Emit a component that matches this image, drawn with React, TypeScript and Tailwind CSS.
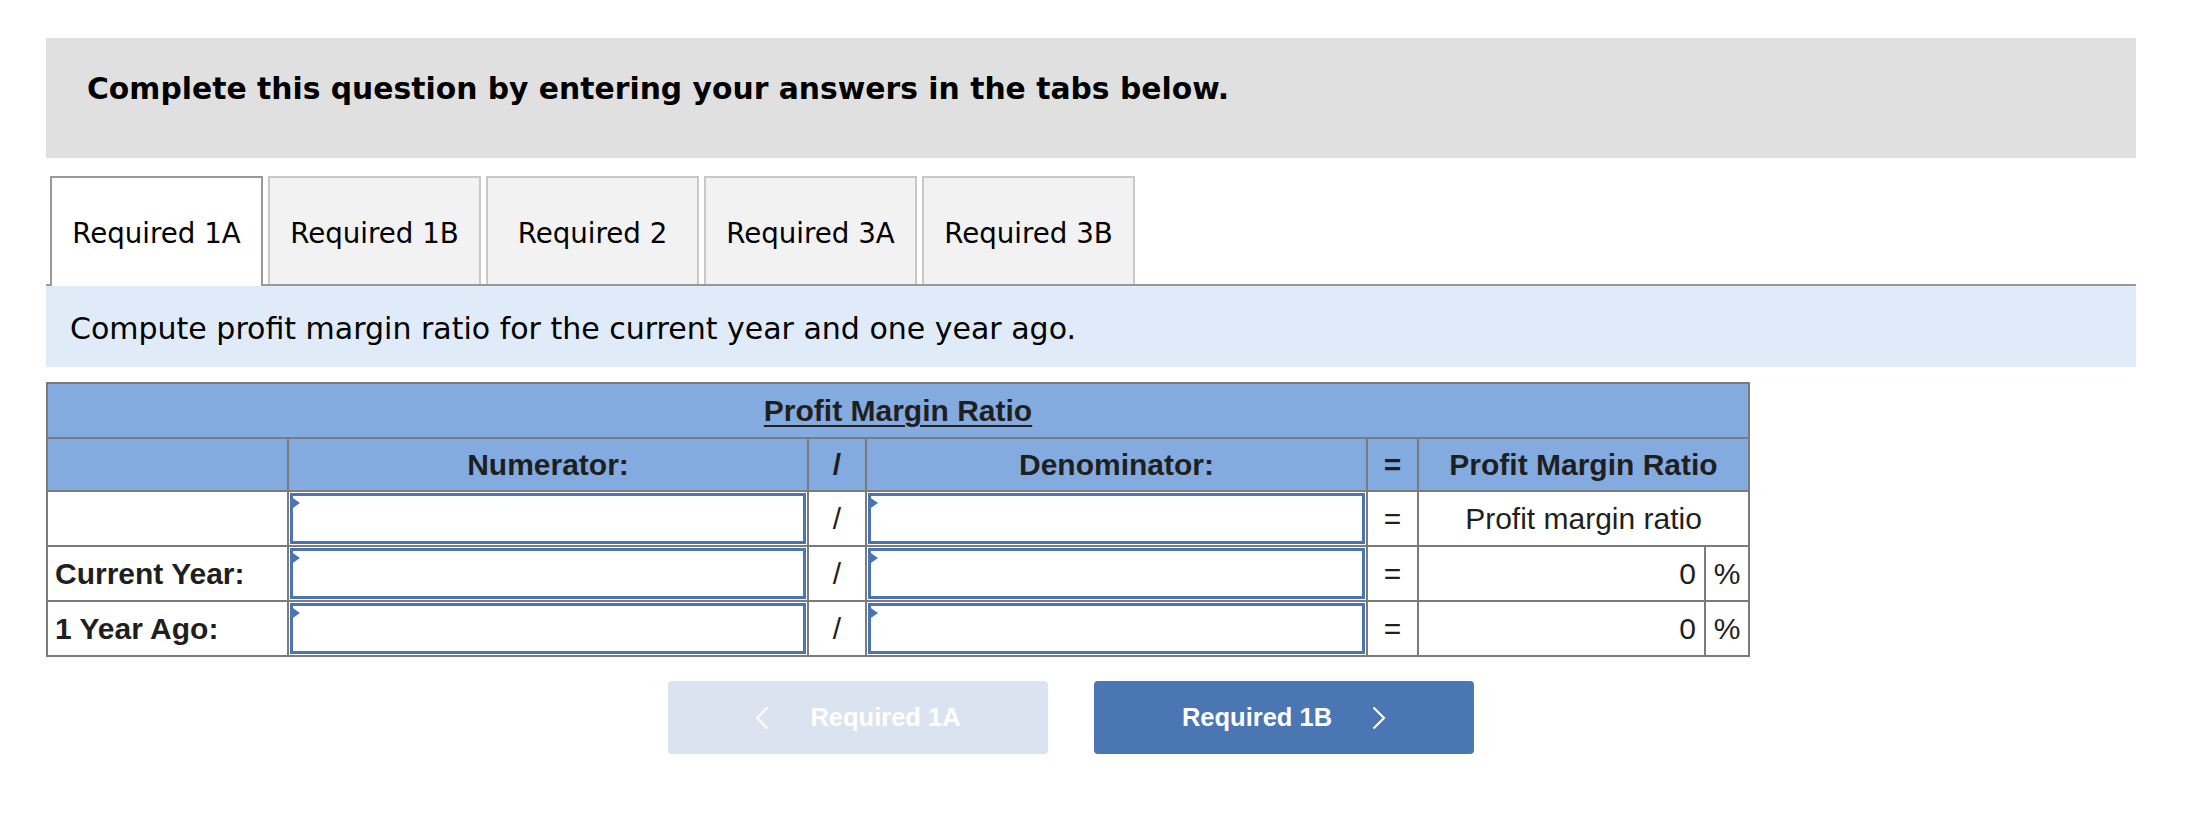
import * as React from "react";

const TABS = ["Required 1A", "Required 1B", "Required 2", "Required 3A", "Required 3B"];

const verdana = "font-['DejaVu_Sans',Verdana,sans-serif]";
const arial = "font-['Liberation_Sans',Arial,sans-serif]";

function Entry() {
  return (
    <div className="relative h-[51px] w-full border-[3px] border-[#4a74b4] bg-white">
      <svg className="absolute -left-[3px] top-0" width="10" height="14" viewBox="0 0 10 14">
        <polygon points="0,0 10,7 0,14" fill="#4a74b4" />
      </svg>
    </div>
  );
}

const cell = "border-2 border-[#7b7b7b]";
const head = "border-2 border-[#7b7b7b] bg-[#84abdf] font-bold text-[#1f1f1f]";

export default function App() {
  const rows = [
    { label: "", result: null },
    { label: "Current Year:", result: "0" },
    { label: "1 Year Ago:", result: "0" },
  ];

  return (
    <div className="min-h-screen bg-white pt-[38px]">
      <div className="ml-[46px] w-[2090px]">
        <div className={`h-[120px] bg-[#e0e0e0] pl-[41px] pt-[34px] ${verdana} text-[29.8px] font-bold leading-[34px] text-black`}>
          Complete this question by entering your answers in the tabs below.
        </div>

        <div className="mt-[18px] flex items-start gap-[5px] border-b-2 border-[#999] pl-[4px]">
          {TABS.map((t, i) => (
            <div
              key={t}
              className={
                i === 0
                  ? `relative z-10 -mb-[2px] flex h-[110px] w-[213px] items-center justify-center border-2 border-b-0 border-[#999] bg-white pt-[4px] ${verdana} text-[27.7px] text-black`
                  : `flex h-[108px] w-[213px] items-center justify-center border-2 border-b-0 border-[#c8c8c8] bg-[#f2f2f2] pt-[6px] ${verdana} text-[27.7px] text-black`
              }
            >
              {t}
            </div>
          ))}
        </div>

        <div className={`flex h-[81px] items-center bg-[#dfebf8] pl-[24px] pt-[3px] ${verdana} text-[30px] text-black`}>
          Compute profit margin ratio for the current year and one year ago.
        </div>

        <table className={`mt-[15px] w-[1702px] table-fixed border-collapse ${arial} text-[30px] text-[#1f1f1f]`}>
          <colgroup>
            <col className="w-[241px]" />
            <col className="w-[520px]" />
            <col className="w-[58px]" />
            <col className="w-[501px]" />
            <col className="w-[51px]" />
            <col className="w-[287px]" />
            <col className="w-[44px]" />
          </colgroup>
          <tbody>
            <tr className="h-[55px]">
              <td colSpan={7} className={`${head} text-center`}>
                <span className="underline decoration-2 underline-offset-[4px]">Profit Margin Ratio</span>
              </td>
            </tr>
            <tr className="h-[53px]">
              <td className={head} />
              <td className={`${head} text-center`}>Numerator:</td>
              <td className={`${head} text-center`}>/</td>
              <td className={`${head} text-center`}>Denominator:</td>
              <td className={`${head} text-center`}>=</td>
              <td colSpan={2} className={`${head} text-center`}>Profit Margin Ratio</td>
            </tr>
            {rows.map((r, i) => (
              <tr key={i} className="h-[55px]">
                <td className={`${cell} pl-[7px] font-bold`}>{r.label}</td>
                <td className={`${cell} p-[1px]`}>
                  <Entry />
                </td>
                <td className={`${cell} text-center`}>/</td>
                <td className={`${cell} p-[1px]`}>
                  <Entry />
                </td>
                <td className={`${cell} text-center`}>=</td>
                {r.result === null ? (
                  <td colSpan={2} className={`${cell} text-center`}>Profit margin ratio</td>
                ) : (
                  <>
                    <td className={`${cell} pr-[8px] text-right`}>{r.result}</td>
                    <td className={`${cell} text-center`}>%</td>
                  </>
                )}
              </tr>
            ))}
          </tbody>
        </table>

        <div className={`mt-[24px] flex gap-[46px] pl-[622px] ${arial} text-[25.5px] font-bold text-white`}>
          <button className="flex h-[73px] w-[380px] items-center justify-center gap-[41px] rounded-[4px] bg-[#dae3ef]">
            <svg width="14" height="24" viewBox="0 0 14 24" fill="none">
              <polyline points="12.5,1.5 2,12 12.5,22.5" stroke="white" strokeWidth="2.2" />
            </svg>
            <span>Required 1A</span>
          </button>
          <button className="flex h-[73px] w-[380px] items-center justify-center gap-[40px] rounded-[4px] bg-[#4a76b4]">
            <span>Required 1B</span>
            <svg width="14" height="24" viewBox="0 0 14 24" fill="none">
              <polyline points="1.5,1.5 12,12 1.5,22.5" stroke="white" strokeWidth="2.2" />
            </svg>
          </button>
        </div>
      </div>
    </div>
  );
}
